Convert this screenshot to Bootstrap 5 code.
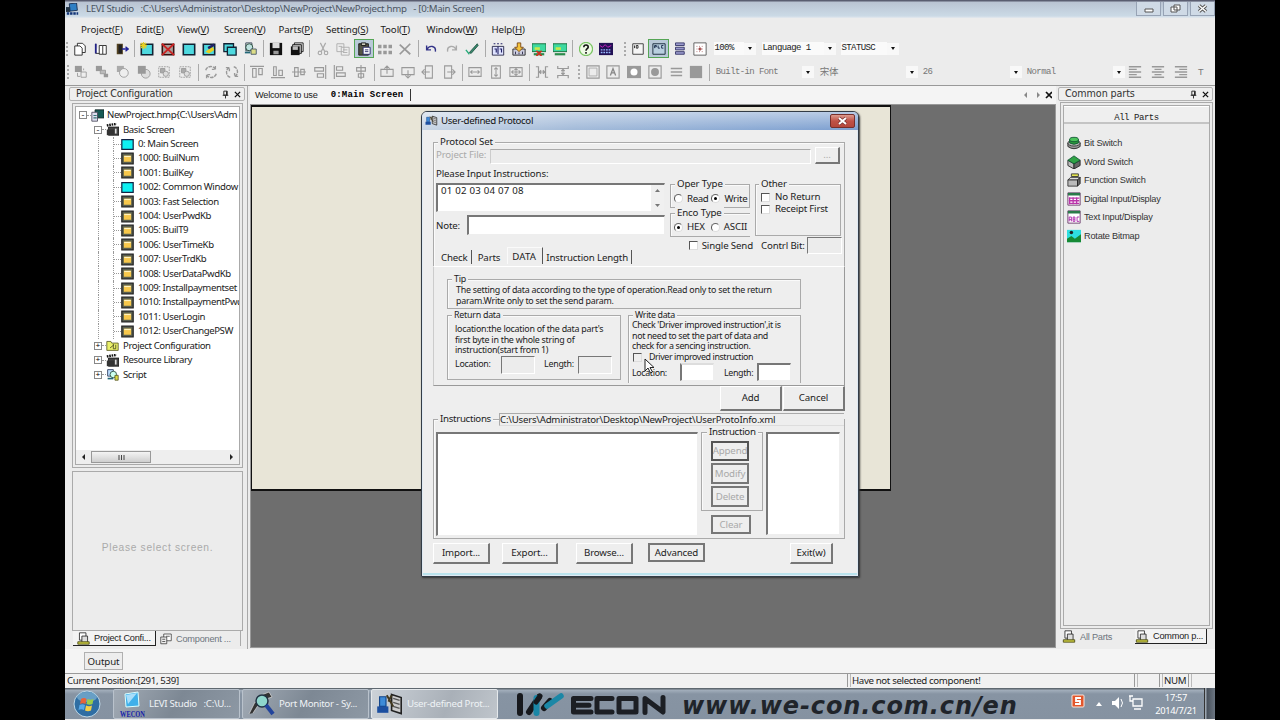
<!DOCTYPE html>
<html lang="en">
<head>
<meta charset="utf-8">
<title>LEVI Studio</title>
<link rel="stylesheet" href="https://cdn.jsdelivr.net/npm/bootstrap@5.3.0/dist/css/bootstrap.min.css">
<style>
body{background:#000;font-family:"Noto Sans","Open Sans",sans-serif;font-size:9.7px;line-height:12px;letter-spacing:-.3px;color:#222;overflow:hidden}
.app{width:1150px;height:720px;background:#ececec;white-space:nowrap}
.app svg{display:block;flex:none}
.serif-mono{font-family:"Liberation Mono",monospace;font-size:9px;letter-spacing:-.6px}
.arial{font-family:"Liberation Sans",sans-serif;font-size:9.2px;letter-spacing:-.22px}
.verd{font-family:"DejaVu Sans",sans-serif;font-size:9.6px;letter-spacing:-.2px}
/* title and menu */
.titlebar{height:18px;background:linear-gradient(#5a5d70 0 1px,#b9c3d2 2px,#cbdae6 16px,#e4e9ee);color:#4c5562;padding-left:1px}
.wbtn{width:25px;height:14px;border:1px solid #97a3b5;border-top:0;background:#cfdae6;margin-right:2px}
.menurow{height:20px;padding:6px 0 0 16px;letter-spacing:-.1px}
.menurow span{display:block}
.tools{height:21px}
.tools2{height:26px;color:#777;padding-left:1px}
.cell{width:20.68px;height:19px;display:flex;align-items:center;justify-content:center;flex:none}
.tools2 .cell{width:20.76px}
.cell.on{background:#b9c9d8;border:1px solid #55a555}
.cell svg{width:14px;height:14px}
.sepr{width:1px;height:17px;background:#aaa;margin:0 2px;flex:none}
.grip{width:3px;height:14px;border-left:2px dotted #aaa;margin:0 1px;flex:none}
.drop{background:#fafafa;height:13px}
.caret{width:12px;height:12px;background:#f8f8f8;display:flex;align-items:center;justify-content:center;flex:none}
.caret::after{content:"";border:2.5px solid transparent;border-top:3px solid #111;border-bottom:0}
/* docked panels */
.mainarea{height:564px;border-top:1px solid #999}
.phead{height:14px;border:1px solid #b2b2b2;background:#efefef;border-radius:2px;padding:0 3px 0 6px;margin-top:1px;color:#333}
.leftcol{width:183px;padding:0 2px 0 4px;border-right:1px solid #a9a9a9}
.rightcol{width:157px;padding-right:2px}
.frame1{border:1px solid #aaa;padding:2px}
.frame2{border:1px solid #aaa;background:#fff}
.tree{height:343px;overflow:hidden;padding-top:1px;letter-spacing:-.4px;font-size:9.6px}
.trow{height:14.42px;display:flex;align-items:center}
.trow>*{flex:none}
.trow svg{width:13px;height:13px}
.exp{width:8px;height:8px;border:1px solid #888;background:#fff;flex:none;font:8px/5px "Liberation Mono",monospace;text-align:center;color:#000;letter-spacing:0}
.vline{width:1px;align-self:stretch;border-left:1px dotted #999;flex:none}
.hline{height:1px;border-top:1px dotted #999;flex:none}
.hscroll{height:14px;background:#eee;padding:0 5px}
.thumb{width:60px;height:12px;border:1px solid #999;background:linear-gradient(#f4f4f4,#cfcfcf);margin-left:5px}
.preview{border:1px solid #aaa;height:160px;margin:3px 2px 0 3px;color:#b0b0b0;padding-bottom:6px}
.ptab{height:15px;display:flex;align-items:center}
.ptab.act{border-right:1px solid #222;border-bottom:1px solid #222;background:#f3f3f3}
.doc{background:#f4f4f4;height:18px}
.stage{background:#6e6e6e;height:544px;border:1px solid #999}
.sheet{width:640px;height:386px;background:#e8e5d7;border:1px solid #111;border-width:2px 1px 2px 1px}
.allparts{height:18px;border-bottom:2px solid #c4c4c4;border-top:1px solid #fff;background:#efefef}
.part{height:18.5px;display:flex;align-items:center;padding-left:3px;color:#333}
.outbar{height:24px;background:#f4f4f4;padding:3px 0 0 19px}
.outtab{border:1px solid #b0b0b0;background:#ededed;height:18px;width:39px;line-height:17px;text-align:center;letter-spacing:-.1px}
.stat{height:15px;background:#f1f1f1;line-height:13px;border-top:1px solid #999;color:#222}
.stat>div{border-right:1px solid #999;height:13px;margin-right:2px;padding-left:2px;flex:none;letter-spacing:-.36px}
.stat>div+div{border-left:1px solid #bbb;padding-left:1px}
/* taskbar */
.task{height:31px;background:linear-gradient(#5f6870 0 1px,#a3afbc 2px,#8794a3 6px,#8592a1);color:#fff}
.tbtn{height:30px;margin-top:1px;border:1px solid #b9c2cc;border-radius:2px;background:linear-gradient(120deg,#a2abb5,#7d8894 50%,#8d98a4);display:flex;align-items:center;color:#eef2f5}
.tbtn.act{background:linear-gradient(110deg,#ccd2d8,#a9b0b8 60%,#bfc5cb);border-color:#e5e9ec}
.site{font:italic bold 24px/36px "DejaVu Sans",sans-serif;letter-spacing:.9px;color:#20242a}
/* dialog */
.dlg{position:absolute;left:421px;top:111px;width:438px;height:466px;border:1px solid #333c46;border-radius:6px 6px 1px 1px;background:#eee;box-shadow:inset 0 0 0 1px #dfe9f2,inset 0 -3px 0 #b9e2ec,1px 1px 2px #333;letter-spacing:-.15px}
.dtitle{height:18px;border-radius:5px 5px 0 0;background:linear-gradient(rgba(255,255,255,.45),rgba(255,255,255,0)),linear-gradient(90deg,#c8d5e4,#a2bad9 35%,#7c9fd0);color:#111;padding:0 3px 0 3px;letter-spacing:-.35px}
.dclose{width:25px;height:14px;border:1px solid #762f2c;border-radius:2px;background:linear-gradient(#dc9b8f,#c05146 50%,#b4473c)}
.dbody{padding:12px 0 0 11px;width:423px}
.grp{position:relative;border:1px solid #aaa;box-shadow:inset 1px 1px 0 #fafafa}
.grp>.lg{position:absolute;top:-7px;background:#eee;padding:0 2px;line-height:12px}
.sm .grp>.lg{top:-6px;line-height:9px}
.sunk{background:#fff;border:1px solid #eee;border-left:2px solid #777;border-top:2px solid #777;flex:none}
.sunk.off{background:#ececec;border-left-width:1px;border-top-width:1px;border-right-color:#fff;border-bottom-color:#fff}
.pbtn{border:1px solid #777;border-left-color:#fff;border-top-color:#fff;border-right-width:2px;border-bottom-width:2px;background:#eee;display:flex;align-items:center;justify-content:center;flex:none}
.pbtn.box{border:2px solid #777}
.pbtn.dis{color:#a9a9a9}
.cb{width:9px;height:9px;background:#fff;border:1px solid #ddd;border-left-color:#555;border-top-color:#555;flex:none}
.rb{width:9px;height:9px;border-radius:50%;background:#fff;border:1px solid #ddd;border-left-color:#555;border-top-color:#666;flex:none;display:flex;align-items:center;justify-content:center}
.rb.on::after{content:"";width:3px;height:3px;border-radius:50%;background:#000}
.sm{font-size:8.9px;line-height:10.6px;letter-spacing:-.25px}
.dtab{height:14px;padding:0 3px 0 5px;line-height:15px;border-right:1px solid #555}
.dtab.act{height:17px;line-height:17px;border-left:1px solid #fafafa;border-top:1px solid #fafafa}
.pane{height:120px;border:1px solid #999;border-top-color:#fff;border-left-color:#ccc}
.cursor{position:absolute;left:222px;top:246px}
</style>
</head>
<body>
<svg width="0" height="0" class="position-absolute"><defs>
<g id="doc" fill="#fff" stroke="#222"><path d="M5 1.5h6l3 3V12H5z"/><path d="M2 4.5h6l2.500 2.500V15H2z"/></g>
<g id="open" fill="#fff" stroke="#222"><path d="M2 2v11h4M6 4h4v10H6zM10 4h4v10h-4"/><path d="M2 2v11" stroke="#228" stroke-width="2"/></g>
<g id="exit"><path d="M2 2h7v12H2z" fill="#542"/><path d="M4 3h4v10H4z" fill="#222"/><path d="M8 8h7M12 5.500l3 2.500-3 2.500" stroke="#229" stroke-width="1.500" fill="none"/></g>
<g id="scr"><path d="M1.500 2.500h13v12h-13z" fill="#4ed9df" stroke="#123" stroke-width="1.800"/></g>
<g id="scrnew"><use href="#scr"/><path d="M0 4h8M4 0v8M1 1l6 6M7 1L1 7" stroke="#e8d020" stroke-width="1.500"/></g>
<g id="scrdel"><path d="M1.500 2.500h13v12h-13z" fill="#a9a09c" stroke="#311" stroke-width="1.800"/><path d="M1 2l14 13M15 2L1 15" stroke="#c22" stroke-width="2"/></g>
<g id="scredit"><use href="#scr"/><path d="M4 11l8-6 2 4-6 4z" fill="#e8d020"/><path d="M7 7l7-4" stroke="#226" stroke-width="3"/></g>
<g id="scrcopy"><path d="M1 2h11v9H1z" fill="#4ed9df" stroke="#123" stroke-width="1.500"/><path d="M5 6h10v9H5z" fill="#4ed9df" stroke="#123" stroke-width="1.500"/></g>
<g id="find"><path d="M2 1h7v9H2z" fill="#eee" stroke="#345"/><circle cx="6" cy="6" r="4" fill="#bfe3e0" stroke="#243"/><path d="M8 8h6v6H8z" fill="#dd8" stroke="#456"/><path d="M1 12h6" stroke="#267" stroke-width="2"/></g>
<g id="save"><path d="M1 1h14v14H1z" fill="#111"/><path d="M4 1h8v6H4z" fill="#ddd"/><path d="M5 10h6v4H5z" fill="#999"/></g>
<g id="saveall"><path d="M5 1h10v10H5z" fill="#eee" stroke="#111"/><path d="M3 3h10v10H3z" fill="#bbb" stroke="#111"/><path d="M1 5h10v10H1z" fill="#111"/><path d="M3 5h6v4H3z" fill="#bbb"/></g>
<g id="cut" stroke="#aaa" stroke-width="1.300" fill="none"><path d="M5 1l5 10M11 1L6 11"/><circle cx="4.500" cy="12.500" r="2"/><circle cx="11.500" cy="12.500" r="2"/></g>
<g id="copy" stroke="#aaa" fill="#eee"><path d="M1 2h8v9H1zM6 6h9v9H6zM8 9h5M8 12h5M3 5h4"/></g>
<g id="paste"><path d="M2 2h11v13H2z" fill="#554" stroke="#111"/><path d="M5 1h5v3H5z" fill="#ccb" stroke="#111"/><path d="M7 6h8v8H7z" fill="#fff" stroke="#226"/><path d="M9 9h4M9 11h4" stroke="#226"/></g>
<g id="grid6" fill="#999"><path d="M0 3h4v4H0zM6 3h4v4H6zM12 3h4v4h-4zM0 10h4v4H0zM6 10h4v4H6zM12 10h4v4h-4z"/></g>
<g id="del" stroke="#999" stroke-width="2"><path d="M2 3l12 11M14 2L2 14"/></g>
<g id="undo" stroke="#338" stroke-width="1.600" fill="none"><path d="M3 4v5h5M3 9c3-6 11-5 10 2"/></g>
<g id="redo" stroke="#aaa" stroke-width="1.600" fill="none"><path d="M13 4v5H8M13 9C10 3 2 4 3 11"/></g>
<g id="pen"><path d="M5 12L14 2l1 2-8 9z" fill="#3a8a70" stroke="#254"/><path d="M1 9l4 5" stroke="#2a7" stroke-width="1.500"/></g>
<g id="build"><path d="M1.500 5h13v10h-13z" fill="#dfe3ff" stroke="#224"/><path d="M3 2h2M7 2h2M11 2h2M4 8h2v4M10 8h2v4M8 5v9" stroke="#226" stroke-width="1.300" fill="none"/></g>
<g id="load"><path d="M1 8h14v7H1z" fill="#ccd" stroke="#222"/><path d="M6 1h4v5h3l-5 5-5-5h3z" fill="#f4c33c" stroke="#741"/><path d="M4 11v3M8 12v2M12 11v3" stroke="#224"/></g>
<g id="mon"><path d="M0 2h16v9H0z" fill="#3ed9a0" stroke="#163"/><path d="M3 6h6v3H3z" fill="#c7e84a"/><path d="M2 14h12" stroke="#2a8a4a" stroke-width="2.500"/></g>
<g id="monx"><use href="#mon"/><path d="M5 10l6 6M11 10l-6 6" stroke="#c32" stroke-width="2"/></g>
<g id="help"><circle cx="8" cy="8" r="7.500" fill="#effbe6" stroke="#7ac563" stroke-width="1.400"/><path d="M5.500 6c0-4 5.500-3 5 0-.3 1.700-2.500 1.500-2.500 4M8 11.500v2" stroke="#111" stroke-width="1.800" fill="none"/></g>
<g id="sim"><path d="M0 1h16v14H0z" fill="#215"/><path d="M1 4l3 2 3-3 3 3 4-2" stroke="#d2c" fill="none"/><path d="M2 9h12M2 12h12" stroke="#9bf" stroke-width="1.500" stroke-dasharray="2 1"/></g>
<g id="idb"><path d="M2 2h12v12H2z" fill="#f5f5f5" stroke="#333"/><path d="M4 4v3M6 4v3h2V4z" stroke="#222" fill="none"/></g>
<g id="plc"><path d="M1 2h14v12H1z" fill="#b9cfdf" stroke="#123"/><path d="M3 7V4h2v1.500H3M7 4v3h2M13 4h-2v3h2" stroke="#124" fill="none"/></g>
<g id="list"><path d="M4 1h10v3H4zM4 6h10v3H4zM4 11h10v3H4z" fill="#99c" stroke="#336"/></g>
<g id="dots"><path d="M1 1h14v14H1z" fill="#fff" stroke="#555"/><path d="M4 5h9M4 8h9M4 11h9" stroke="#a66" stroke-dasharray="1 2"/><path d="M8 6v4M6 8h4" stroke="#811"/></g>
<g id="ord1"><path d="M1 1h8v7H1z" fill="#999"/><path d="M8 8h6v6H8z" fill="#eee" stroke="#999"/><path d="M4 9v4h3M11 6v-2" stroke="#999" fill="none"/></g>
<g id="ord2"><path d="M1 1h7v6H1z" fill="#999"/><path d="M6 6h6v4H6z" fill="#bbb" stroke="#999"/><path d="M10 10h5v4h-5z" fill="#999"/></g>
<g id="ord3"><path d="M1 1h8v7H1z" fill="#aaa"/><circle cx="9" cy="9" r="5" fill="#eee" stroke="#999"/></g>
<g id="ord4"><circle cx="10" cy="10" r="5" fill="#ddd" stroke="#999"/><path d="M1 1h9v9H1z" fill="#999"/></g>
<g id="grpd" fill="none" stroke="#999"><path d="M2 2h12v12H2z" stroke-dasharray="2 1"/><path d="M4 4h5v5H4z" fill="#aaa"/><circle cx="10" cy="10" r="3" fill="#ddd"/></g>
<g id="rot" fill="none" stroke="#999" stroke-width="1.600"><path d="M2 6c1-5 9-6 11-1M14 10c-1 5-9 6-11 1M13 1v4H9M3 15v-4h4" stroke-dasharray="4 1"/></g>
<g id="altop" fill="none" stroke="#999" stroke-width="1.300"><path d="M0 1.500h16M3 4h4v10H3zM10 4h4v7h-4z"/></g>
<g id="albot" fill="none" stroke="#999" stroke-width="1.300"><path d="M0 14.500h16M3 2h3v10H3zM9 6h4v6H9z"/></g>
<g id="almid" fill="none" stroke="#999" stroke-width="1.300"><path d="M0 8h16M3 3h4v10H3zM10 5h4v6h-4z"/></g>
<g id="distc" fill="none" stroke="#999" stroke-width="1.200"><path d="M1 5h14v8H1zM8 10V1M5 4l3-3 3 3"/></g>
<g id="wid" fill="none" stroke="#999" stroke-width="1.200"><path d="M1 3h14v10H1zM3 8h10M5 6L3 8l2 2M11 6l2 2-2 2"/></g>
<g id="wid4"><use href="#wid"/><path d="M8 3v10M6 6l2-2 2 2M6 10l2 2 2-2" fill="none" stroke="#999" stroke-width="1.200"/></g>
<g id="gap" fill="none" stroke="#999" stroke-width="1.400"><path d="M1 2h3v12H1M15 2h-3v12h3M5 8h6M7 6L5 8l2 2M9 6l2 2-2 2"/></g>
<g id="shA" fill="none" stroke="#999" stroke-width="1.300"><path d="M1 1h14v14H1z"/></g>
<g id="shIn"><use href="#shA"/><path d="M3.500 3.500h9v9h-9z" fill="none" stroke="#aaa"/></g>
<g id="shTxt"><use href="#shA"/><path d="M5 12l3-8 3 8M6 9h4" fill="none" stroke="#888" stroke-width="1.500"/></g>
<g id="shInv"><path d="M0 1h16v14H0z" fill="#999"/><circle cx="8" cy="8" r="4" fill="#fff"/></g>
<g id="shDot"><use href="#shA"/><circle cx="8" cy="8" r="4.500" fill="#999"/></g>
<g id="lines" stroke="#999" stroke-width="1.800"><path d="M2 4h13M2 8h13M2 12h13"/></g>
<g id="solid"><path d="M1 1h14v14H1z" fill="#999"/></g>
<g id="tleft" stroke="#999" stroke-width="1.500"><path d="M1 2h14M1 5h9M1 8h14M1 11h9M1 14h14"/></g>
<g id="tcen" stroke="#999" stroke-width="1.500"><path d="M1 2h14M4 5h8M1 8h14M4 11h8M1 14h14"/></g>
<g id="pin"><path d="M5 2h6v7H5zM3 9.500h10M8 10v5" fill="none" stroke="#222" stroke-width="1.600"/><path d="M9 2h2v7H9z" fill="#222"/></g>
<g id="xx"><path d="M2 2l12 12M14 2L2 14" stroke="#111" stroke-width="3"/></g>
<g id="proj"><path d="M5 1h11v10H5z" fill="#165a55" stroke="#122"/><path d="M1 4h7v11H1z" fill="#dde" stroke="#445"/><path d="M3 8h4M3 11h4" stroke="#377" stroke-width="1.500"/></g>
<g id="clap"><path d="M3 5h13v10H3z" fill="#444" stroke="#111"/><path d="M1 8h9v7H1z" fill="#333"/><path d="M1 3l12-2" stroke="#111" stroke-width="3" stroke-dasharray="2 1"/><path d="M12 7v6" stroke="#ddd" stroke-width="2"/></g>
<g id="cyan"><path d="M1 2h14v12H1z" fill="#0eeff2" stroke="#124" stroke-width="1.500"/></g>
<g id="win"><path d="M1 1.500h14v13H1z" fill="#5a6050" stroke="#222" stroke-width="1.500"/><path d="M3.500 4.500h9v7.500h-9z" fill="#f8c84c"/><path d="M4 5.500h8" stroke="#fff2c0" stroke-width="1.500"/></g>
<g id="fold"><path d="M1 3h5l1 2h8v9H1z" fill="#eaf06a" stroke="#552"/><path d="M5 11l5-4M9 6v6h3V7" stroke="#442" fill="none"/></g>
<g id="scrpt"><path d="M2 2h7v8H2z" fill="#bdf" stroke="#235"/><circle cx="9" cy="8" r="4" fill="#cfe" stroke="#243"/><path d="M11 9h4v6h-4z" fill="#dd4" stroke="#552"/><path d="M2 13h7" stroke="#267" stroke-width="2"/></g>
<g id="bit"><path d="M1 8v4q7 5 14 0V8z" fill="#999" stroke="#222"/><ellipse cx="8" cy="8" rx="7" ry="3.500" fill="#bbb" stroke="#333"/><path d="M3 4v4q5 3 10 0V4z" fill="#2b9a3c" stroke="#153"/><ellipse cx="8" cy="4" rx="5" ry="2.500" fill="#4cc45c" stroke="#153"/></g>
<g id="word"><path d="M1 6l7 4v6l-7-4z" fill="#bbb" stroke="#222"/><path d="M15 6l-7 4v6l7-4z" fill="#666" stroke="#222"/><path d="M8 1l7 5-7 4-7-4z" fill="#2fa345" stroke="#153"/></g>
<g id="func"><path d="M1 8l3-3h11l-3 3z" fill="#ddd" stroke="#333"/><path d="M1 8h11v7H1z" fill="#bbb" stroke="#333"/><path d="M12 8l3-3v7l-3 3z" fill="#666" stroke="#222"/><path d="M5 1h8v3H5z" fill="#e6e650" stroke="#333"/></g>
<g id="digi"><path d="M1 1h14v14H1z" fill="#fff" stroke="#636"/><path d="M1 1h14v3H1z" fill="#2b7a4a"/><path d="M3 6v8M7 6v8M11 6v8M2 7h12M2 10h12M2 13h12" stroke="#b3a" stroke-width="1.500"/></g>
<g id="abc"><path d="M1 1h14v14H1z" fill="#fff" stroke="#636"/><path d="M1 1h14v3H1z" fill="#2b7a4a"/><path d="M2.500 13V8h2.500v5M2.500 11H5M7 8v5h2V8zM7 10.500h2M14 8h-2.500v5H14" stroke="#a2a" fill="none"/></g>
<g id="bmp"><path d="M0 1h16v14H0z" fill="#2edfe0"/><path d="M0 11l5-3 4 3 7-5v9H0z" fill="#168a35"/><circle cx="5" cy="4" r="2" fill="#222"/></g>
<g id="levi"><path d="M4 1l9-1 1 9-9 1z" fill="#2f7fc4" stroke="#124"/><path d="M0 5h5v6H0z" fill="#234"/><path d="M1 13h14" stroke="#137" stroke-width="3" stroke-dasharray="3 1"/></g>
<g id="prot"><path d="M1.500 3h4v6h-4z" fill="#3d8bd8" stroke="#148" stroke-width=".7"/><path d="M0 9h7v4H0z" fill="#1c4fa0"/><path d="M9 1.500l6 2v10l-6-2z" fill="#ccc" stroke="#222"/><path d="M10 4l4 1.300M10 6.500l4 1.300M10 9l4 1.300" stroke="#555" stroke-width=".8"/><path d="M6 2l4 7M7 6l2-4" stroke="#443a20" stroke-width="1.200"/></g>
<g id="tabi"><path d="M3 1h8v9H3z" fill="#fff" stroke="#222"/><path d="M6 5h7v8H6z" fill="#ddd" stroke="#222"/><path d="M1 12h14v3H1z" fill="#c8c840" stroke="#441"/></g>
<g id="prop"><path d="M5 2h10v9H5z" fill="#fff" stroke="#333"/><path d="M1 6h8v9H1z" fill="#eee" stroke="#333"/><path d="M3 9h4M3 12h4M8 5h5" stroke="#333"/></g>
</defs></svg>

<div class="app mx-auto d-flex flex-column">
  <div class="titlebar d-flex align-items-center">
    <svg width="13" height="13" viewBox="0 0 16 16"><use href="#levi"/></svg>
    <span style="margin-left:7px">LEVI Studio &nbsp; :C:\Users\Administrator\Desktop\NewProject\NewProject.hmp &nbsp; - [0:Main Screen]</span>
    <div class="d-flex ms-auto align-self-start" style="margin-top:2px">
      <div class="wbtn"><svg width="23" height="13"><path d="M8 7h8v3H8z" fill="#fff" stroke="#555"/></svg></div>
      <div class="wbtn"><svg width="23" height="13"><path d="M10 3h6v5h-6zM7 5h6v5H7z" fill="#fff" stroke="#555"/></svg></div>
      <div class="wbtn me-0"><svg width="23" height="13"><path d="M8 3.500l7 6M15 3.500l-7 6" stroke="#555" stroke-width="3.500"/><path d="M8 3.500l7 6M15 3.500l-7 6" stroke="#fff" stroke-width="1.500"/></svg></div>
    </div>
  </div>
  <div class="menurow d-flex" id="menu"></div>
  <div class="tools d-flex align-items-center" id="t1"></div>
  <div class="tools2 d-flex align-items-center" id="t2"></div>

  <div class="mainarea d-flex">
    <div class="leftcol">
      <div class="phead d-flex align-items-center"><span class="verd">Project Configuration</span><svg class="ms-auto" width="9" height="9" viewBox="0 0 16 16"><use href="#pin"/></svg><svg class="ms-1" width="7" height="7" viewBox="0 0 16 16"><use href="#xx"/></svg></div>
      <div class="frame1" style="margin:2px 2px 0 3px">
        <div class="frame2">
          <div class="tree" id="tree"></div>
          <div class="hscroll d-flex align-items-center"><svg width="5" height="6"><path d="M4 0v6L1 3z" fill="#222"/></svg><div class="thumb d-flex justify-content-center align-items-center"><svg width="7" height="5"><path d="M1 0v5M3.500 0v5M6 0v5" stroke="#444"/></svg></div><svg class="ms-auto" width="5" height="6"><path d="M1 0v6l3-3z" fill="#222"/></svg></div>
        </div>
      </div>
      <div class="preview d-flex justify-content-center align-items-center"><span style="letter-spacing:.7px;font-size:10.2px;font-family:'Liberation Sans',sans-serif;color:#aaa">Please select screen.</span></div>
      <div class="d-flex arial ms-1">
        <div class="ptab act ps-1" style="width:83px"><svg width="13" height="13" viewBox="0 0 16 16" class="me-1"><use href="#tabi"/></svg>Project Confi...</div>
        <div class="ptab ps-1 text-secondary" style="width:85px;border-right:1px solid #aaa"><svg width="12" height="13" viewBox="0 0 16 16" class="me-1"><use href="#prop"/></svg>Component ...</div>
      </div>
    </div>
    <div class="flex-grow-1" style="padding:0 2px">
      <div class="doc d-flex align-items-center"><span class="arial" style="padding-left:5px">Welcome to use</span><span class="serif-mono fw-bold text-black" style="margin-left:13px;letter-spacing:.2px">0:Main Screen</span><span class="sepr" style="margin-left:7px;height:12px;background:#333"></span>
        <svg class="ms-auto me-1" width="30" height="8"><path d="M5 1v6L2 4zM15 1v6l3-3z" fill="#888"/><path d="M24 1l6 6M30 1l-6 6" stroke="#111" stroke-width="1.700"/></svg></div>
      <div class="stage"><div class="sheet"></div></div>
    </div>
    <div class="rightcol">
      <div class="phead d-flex align-items-center"><span class="verd" style="letter-spacing:-.1px">Common parts</span><svg class="ms-auto" width="9" height="9" viewBox="0 0 16 16"><use href="#pin"/></svg><svg class="ms-1" width="7" height="7" viewBox="0 0 16 16"><use href="#xx"/></svg></div>
      <div class="frame1" style="margin:1px 0 0 2px;height:527px"><div class="frame2 h-100" style="background:#ececec">
        <div class="allparts serif-mono text-center" style="letter-spacing:-.45px;padding-top:5px">All Parts</div>
        <div id="parts" style="padding-top:10px"></div></div>
      </div>
      <div class="d-flex arial ms-1">
        <div class="ptab ps-0 text-secondary" style="width:73px"><svg width="14" height="13" viewBox="0 0 16 16" class="me-1"><use href="#tabi"/></svg>All Parts</div>
        <div class="ptab act" style="width:72px"><svg width="14" height="13" viewBox="0 0 16 16" class="me-1"><use href="#tabi"/></svg>Common p...</div>
      </div>
    </div>
  </div>

  <div class="outbar"><div class="outtab">Output</div></div>
  <div class="stat d-flex"><div style="width:783px">Current Position:[291, 539]</div><div style="width:285px">Have not selected component!</div><div style="width:23px"></div><div style="width:27px">NUM</div><div style="width:24px;margin:0;border-right:0"></div></div>

  <div class="task d-flex">
    <svg width="44" height="31"><circle cx="22" cy="16" r="13" fill="#2f6ea3" stroke="#bfd8e6"/><ellipse cx="22" cy="9" rx="10" ry="5" fill="#8fbfdc" opacity=".6"/><path d="M16 11q3-2 5.500 0l-1 5q-3-1.500-5.500 0z" fill="#e8633a"/><path d="M22.500 11q3 1.500 6 0l-1 5q-3 1.500-6 0z" fill="#9ccc4a"/><path d="M14.500 17q3-1.500 5.500 0l-1 5q-3-1.500-5.500 0z" fill="#58a8e8"/><path d="M21 17.500q3 1.500 6 0l-1 5q-3 1.500-6 0z" fill="#f6cf47"/></svg>
    <div class="tbtn" style="width:127px;margin-left:4px">
      <svg width="31" height="29" class="ms-1"><path d="M7 4l13-2 1 14-13 1z" fill="#3fb0ea" stroke="#dff" /><path d="M8 5l11-2-9 11z" fill="#a9defa"/><text x="2" y="27" font-family="Liberation Serif" font-weight="bold" font-size="8.500" letter-spacing="0" fill="#1420a8" textLength="25" lengthAdjust="spacingAndGlyphs">WECON</text></svg>
      <span>LEVI Studio &nbsp;&nbsp;:C:\U...</span></div>
    <div class="tbtn" style="width:127px;margin-left:2px">
      <svg width="32" height="28" class="ms-1"><path d="M2 24L8 12l4 2-6 9M12 6l10-4 3 5-9 3" fill="#333" stroke="#ddd" stroke-width=".7"/><circle cx="15" cy="11" r="6" fill="#8fd6cc" stroke="#234" stroke-width="1.500"/><path d="M19 15l7 9" stroke="#22449c" stroke-width="4"/></svg>
      <span>Port Monitor - Sy...</span></div>
    <div class="tbtn act" style="width:127px;margin-left:2px"><svg width="26" height="24" viewBox="0 0 16 15" style="margin:0 4px 0 5px"><use href="#prot"/></svg><span>User-defined Prot...</span></div>
    <svg width="156" height="30" viewBox="0 0 156 30" style="margin-left:16px" fill="none" stroke-linecap="round" stroke-linejoin="round">
      <path d="M6 8v17" stroke="#17191d" stroke-width="6"/><path d="M15 24L25 9M30 20L36 13" stroke="#17191d" stroke-width="6"/><path d="M22.500 25V10" stroke="#1b87a6" stroke-width="6"/><path d="M33 18L47 8" stroke="#1b87a6" stroke-width="5.500"/><path d="M22 14L26 8" stroke="#17191d" stroke-width="5"/>
      <path d="M77 10.500H59.500v13.500H77M60 17.200h15M98 10.500H83v13.500h15M105 10.500h17v13.500h-17zM131 24.500V10.500l18 13.500V9.500" stroke="#1c1f24" stroke-width="5"/>
    </svg>
    <span class="site" style="margin-left:12px">www.we-con.com.cn/en</span>
    <svg width="76" height="30" class="ms-auto"><rect x="4" y="7" width="12" height="12" rx="1" fill="#e2562c" stroke="#fbe7dc"/><path d="M13 10H8v3h4v3H7" stroke="#fff" stroke-width="1.800" fill="none"/><path d="M28 18h6l-3-4z" fill="#fff"/><path d="M44 13h3l4-4v12l-4-4h-3z" fill="#fff"/><path d="M53 11q3 4 0 8" stroke="#fff" fill="none"/><path d="M65 11h9v7h-9zM66 21h7M62 8v5h3M61 8h4" stroke="#fff" fill="none" stroke-width="1.300"/></svg>
    <div class="text-center" style="width:54px;padding:3px 0 0 0;line-height:13px;margin-left:5px;font-size:9.3px">17:57<br>2014/7/21</div>
    <div style="width:11px;margin-left:1px;background:linear-gradient(90deg,#b0bac4,#4a535e 25%,#6c7682);border-left:1px solid #333"></div>
  </div>
</div>

<div class="dlg text-nowrap">
  <div class="dtitle d-flex align-items-center"><svg width="13" height="12" viewBox="0 0 16 16"><use href="#prot"/></svg><span style="margin-left:3px">User-defined Protocol</span>
    <div class="dclose ms-auto"><svg width="23" height="12" class="d-block"><path d="M8 3l7 6M15 3l-7 6" stroke="#733" stroke-width="3.500"/><path d="M8 3l7 6M15 3l-7 6" stroke="#fff" stroke-width="2"/></svg></div></div>
  <div class="dbody">
    <div class="grp" style="height:124px;border-bottom:0;padding:4px 0 0 2px">
      <span class="lg" style="left:4px">Protocol Set</span>
      <div class="d-flex" style="height:18px"><span style="color:#aaa;width:54px;line-height:16px">Project File:</span><div class="sunk off" style="width:321px;height:15px;margin-top:2px;border-left-color:#ccc;border-top-color:#aaa"></div><div class="pbtn dis" style="width:25px;height:17px;margin-left:4px">...</div></div>
      <div class="d-flex">
        <div style="width:229px">
          <div style="height:18px;line-height:17px">Please Input Instructions:</div>
          <div class="sunk d-flex" style="height:29px;margin-bottom:3px"><span style="padding:0 0 0 3px;letter-spacing:.22px">01 02 03 04 07 08</span><div class="ms-auto d-flex flex-column justify-content-between align-items-center py-1" style="width:13px;background:#f0f0f0"><svg width="5" height="3"><path d="M0 3h5L2.500 0z" fill="#777"/></svg><svg width="5" height="3"><path d="M0 0h5L2.500 3z" fill="#777"/></svg></div></div>
          <div class="d-flex align-items-center"><span style="width:31px;padding-top:2px">Note:</span><div class="sunk flex-grow-1" style="height:20px"></div></div>
        </div>
        <div style="width:80px;margin:19px 0 0 5px">
          <div class="grp d-flex align-items-center" style="height:24px;padding:5px 0 0 3px"><span class="lg" style="left:4px">Oper Type</span><i class="rb"></i><span style="margin-left:4px;letter-spacing:-.35px">Read</span><i class="rb on" style="margin-left:3px"></i><span style="margin-left:4px;letter-spacing:-.3px">Write</span></div>
          <div class="grp d-flex align-items-center" style="height:24px;margin-top:5px;padding:4px 0 0 3px;border-right:0"><span class="lg" style="left:4px">Enco Type</span><i class="rb on"></i><span class="ms-1">HEX</span><i class="rb" style="margin-left:6px"></i><span class="ms-1">ASCII</span></div>
        </div>
        <div class="grp" style="width:86px;height:52px;margin:19px 0 0 5px;padding:6px 0 0 5px"><span class="lg" style="left:3px">Other</span>
          <div class="d-flex align-items-center"><i class="cb"></i><span style="margin-left:5px">No Return</span></div>
          <div class="d-flex align-items-center"><i class="cb"></i><span style="margin-left:5px;letter-spacing:-.22px">Receipt First</span></div></div>
      </div>
      <div class="d-flex" style="height:29px;margin-top:-2px">
        <div class="d-flex align-items-end" style="padding-left:1px"><div class="dtab" style="padding-left:4px">Check</div><div class="dtab border-end-0" style="padding-left:6px">Parts</div><div class="dtab act" style="margin-left:4px;padding-left:4px;width:36px;letter-spacing:.1px">DATA</div><div class="dtab" style="padding-left:3px;letter-spacing:-.15px">Instruction Length</div></div>
        <div class="d-flex align-items-center ms-auto" style="height:19px;margin:1px 2px 0 0"><i class="cb"></i><span style="margin:0 8px 0 4px">Single Send</span><span style="width:46px">Contrl Bit:</span><div class="sunk off" style="width:35px;height:17px;border-color:#777 #fff #fff #777"></div></div>
      </div>
    </div>
    <div class="pane sm" style="padding:12px 0 0 13px">
      <div class="grp" style="width:354px;height:30px;padding:5px 0 0 8px"><span class="lg" style="left:4px">Tip</span>The setting of data according to the type of operation.Read only to set the return<br>param.Write only to set the send param.</div>
      <div class="d-flex" style="margin-top:6px">
        <div class="grp" style="width:174px;height:65px;padding:8px 0 0 7px"><span class="lg" style="left:4px">Return data</span>location:the location of the data part's<br>first byte in the whole string of<br>instruction(start from 1)
          <div class="d-flex"><span style="width:46px;line-height:15px">Location:</span><div class="sunk off" style="width:34px;height:18px;border-color:#777 #fff #fff #777"></div><span style="margin-left:9px;width:34px;line-height:15px">Length:</span><div class="sunk off" style="width:34px;height:18px;border-color:#777 #fff #fff #777"></div></div></div>
        <div class="grp" style="width:173px;height:68px;border-bottom:0;margin-left:7px;padding:4px 0 0 3px;letter-spacing:-.35px"><span class="lg" style="left:4px">Write data</span>Check 'Driver improved instruction',it is<br>not need to set the part of data and<br>check for a sencing instruction.
          <div class="d-flex align-items-center"><i class="cb" style="background:#eee;margin-left:1px"></i><span style="margin-left:7px;letter-spacing:-.4px">Driver improved instruction</span></div>
          <div class="d-flex" style="margin-top:1px"><span style="width:48px;line-height:19px">Location:</span><div class="sunk" style="width:34px;height:18px;border-top-color:#ddd"></div><span style="margin-left:10px;width:33px;line-height:19px">Length:</span><div class="sunk" style="width:34px;height:18px"></div></div></div>
      </div>
    </div>
    <div class="d-flex justify-content-end"><div class="pbtn" style="width:62px;height:25px;margin-right:1px">Add</div><div class="pbtn" style="width:62px;height:25px">Cancel</div></div>
    <div class="grp d-flex" style="height:120px;margin-top:8px;padding:12px 0 0 2px">
      <span class="lg" style="left:4px;letter-spacing:-.3px">Instructions</span>
      <div class="lg" style="left:65px;width:345px;height:13px;padding:0;border:1px solid #aaa;border-right:0;border-bottom-color:#ddd;line-height:12px;letter-spacing:-.23px">C:\Users\Administrator\Desktop\NewProject\UserProtoInfo.xml</div>
      <div class="sunk" style="width:262px;height:104px"></div>
      <div style="width:62px;margin-left:3px"><div class="grp d-flex flex-column align-items-center" style="height:79px;padding:8px 4px 0 0;gap:2px"><span class="lg" style="left:5px;letter-spacing:-.3px">Instruction</span><div class="pbtn box dis overflow-hidden" style="width:38px;height:20px;border-color:#555">Append</div><div class="pbtn box dis" style="width:38px;height:21px">Modify</div><div class="pbtn box dis" style="width:38px;height:21px">Delete</div></div>
        <div class="pbtn box dis" style="width:40px;height:19px;margin:4px 0 0 10px">Clear</div></div>
      <div class="sunk" style="width:74px;height:103px;margin-left:3px"></div>
    </div>
    <div class="d-flex" style="margin-top:4px"><div class="pbtn" style="width:57px;height:21px">Import...</div><div class="pbtn" style="width:56px;height:21px;margin-left:12px">Export...</div><div class="pbtn" style="width:57px;height:21px;margin-left:18px">Browse...</div><div class="pbtn box" style="width:57px;height:19px;margin-left:15px">Advanced</div><div class="pbtn" style="width:43px;height:21px;margin-left:85px">Exit(w)</div></div>
  </div>
  <svg class="cursor" width="12" height="17" viewBox="0 0 12 17"><path d="M1 1v12l3-3 2.500 5 2-1-2.500-4.500h4z" fill="#fff" stroke="#222"/></svg>
</div>

<script src="https://cdn.jsdelivr.net/npm/bootstrap@5.3.0/dist/js/bootstrap.bundle.min.js"></script>
<script>
const $=id=>document.getElementById(id);
const ico=(n,t)=>`<svg width="14" height="14" viewBox="0 0 16 16"${t?` style="transform:${t}"`:''}><use href="#${n}"/></svg>`;
// menu: label, accelerator, width
$('menu').innerHTML=[['Project','F',55],['Edit','E',41],['View','V',47],['Screen','V',54.5],['Parts','P',47.5],['Setting','S',54.5],['Tool','T',46],['Window','W',65],['Help','H',40]]
 .map(([l,k,w])=>`<span style="width:${w}px">${l}(<u>${k}</u>)</span>`).join('');
// toolbars: | separator, : grip, * pressed, @deg rotation
const bar=s=>s.split(' ').map(k=>{
 if(k=='|')return '<i class="sepr"></i>'; if(k==':')return '<i class="grip"></i>';
 const on=k[0]=='*'; const [n,r]=k.replace('*','').split('@');
 return `<span class="cell${on?' on':''}">${ico(n,r?`rotate(${r}deg)`:'')}</span>`;}).join('');
const sp=w=>`<span style="width:${w}px"></span>`;
const combo=(t,w,c='')=>`<span class="serif-mono ${c}" style="width:${w}px">${t}</span><i class="caret"></i>`;
$('t1').innerHTML=bar(': doc open exit | scrnew scrdel scr scredit scrcopy find | save saveall | cut copy *paste grid6 del | undo redo pen | build load monx mon | help sim')+sp(6)+bar(': idb *plc list dots')
 +sp(4)+combo('100%',30,'drop')+sp(6)+combo('Language 1',62,'drop')+sp(5)+combo('STATUSC',46,'drop');
$('t2').innerHTML=bar(': ord1 ord2 ord3 ord4 grpd grpd | rot rot@90 | altop albot almid altop@90 altop@270 almid@90 | distc distc@180 distc@270 distc@90 | wid wid@90 wid4 | gap gap@90')+sp(4)+bar(': shIn shTxt shInv shDot lines solid |')
 +sp(4)+combo('Built-in Font',86)+sp(6)+`<span style="font-family:'Noto Sans CJK SC',sans-serif;font-size:9.5px;line-height:10px;padding-bottom:2px;width:86px">宋体</span><i class="caret"></i>`+sp(5)+combo('26',87)+sp(5)+combo('Normal',86)+bar('tleft')+sp(2)+bar('tcen')+sp(2)+bar('tleft@180')+sp(7)+'<span class="arial">T</span>';
// project tree
const rows=[[0,'proj','NewProject.hmp{C:\\Users\\Adm','-'],[1,'clap','Basic Screen','-'],...[['cyan','0: Main Screen'],['win','1000: BuilNum'],['win','1001: BuilKey'],['cyan','1002: Common Window'],['win','1003: Fast Selection'],['win','1004: UserPwdKb'],['win','1005: BuilT9'],['win','1006: UserTimeKb'],['win','1007: UserTrdKb'],['win','1008: UserDataPwdKb'],['win','1009: Installpaymentset'],['win','1010: InstallpaymentPwd'],['win','1011: UserLogin'],['win','1012: UserChangePSW']].map(a=>[2,...a]),[1,'fold','Project Configuration','+'],[1,'clap','Resource Library','+'],[1,'scrpt','Script','+']];
$('tree').innerHTML=rows.map(([d,i,t,e])=>{
 const head=d==0?sp(3):d==1?sp(18):sp(22)+'<i class="vline"></i>'+sp(14)+'<i class="vline"></i>';
 return `<div class="trow">${head}${e?`<i class="exp fst-normal">${e}</i>`:''}<i class="hline" style="width:${e?4:7}px"></i>${ico(i)}<span style="margin-left:${d==0?3:4}px">${t}</span></div>`}).join('');
$('parts').innerHTML=[['bit','Bit Switch'],['word','Word Switch'],['func','Function Switch'],['digi','Digital Input/Display'],['abc','Text Input/Display'],['bmp','Rotate Bitmap']].map(([i,t])=>`<div class="part arial">${ico(i)}<span style="margin-left:3px">${t}</span></div>`).join('');
</script>
</body>
</html>
